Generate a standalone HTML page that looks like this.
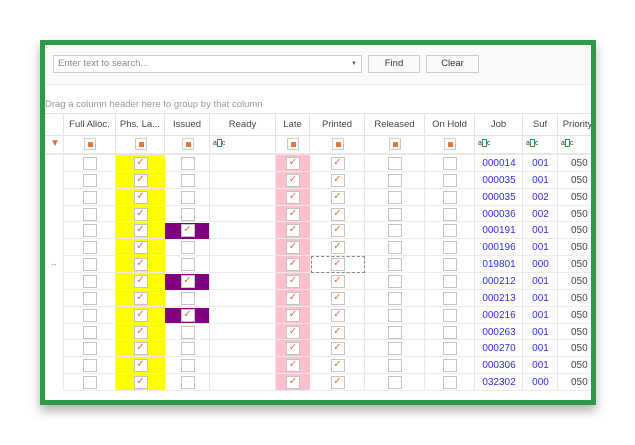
<!DOCTYPE html>
<html><head><meta charset="utf-8"><style>
*{box-sizing:border-box;margin:0;padding:0}
body{width:635px;height:445px;background:#fff;position:relative;overflow:hidden;font-family:"Liberation Sans",sans-serif;font-size:9.5px;color:#444}
#frame{position:absolute;left:40px;top:40px;width:556px;height:365px;border:5px solid #2e9a48;background:#fff;overflow:hidden;box-shadow:0 6px 10px rgba(0,0,0,0.3)}
.a{position:absolute}
.cb{position:absolute;width:12px;height:12px;border:1.5px solid #c4c4c4;background:#fff}
.ck{color:#e0703a;font-size:10px;line-height:10px;text-align:center}
.fsq{position:absolute;width:12px;height:12px;border:1px solid #ccc;background:#fff}
.fsq:after{content:"";position:absolute;left:3px;top:3px;width:5px;height:5px;background:#e07a3a}
.hdr{position:absolute;top:73px;height:22px;line-height:22px;text-align:center;border-right:1px solid #e4e4e4;color:#444;font-size:9.5px;white-space:nowrap;overflow:hidden}
.num{position:absolute;text-align:center;color:#3030e0;font-size:10px}
</style></head><body>
<div id="frame">
<div class="a" style="left:0;top:0;width:560px;height:40px;background:#fafafa;border-bottom:1px solid #eee"></div>
<div class="a" style="left:8px;top:10px;width:309px;height:18px;border:1px solid #ccc;background:#fff;color:#888;line-height:16px;padding-left:4px">Enter text to search...<span style="position:absolute;right:4px;font-size:6px;color:#555">▼</span></div>
<div class="a" style="left:323px;top:10px;width:52px;height:18px;border:1px solid #ccc;background:#fafafa;text-align:center;line-height:16px;color:#333">Find</div>
<div class="a" style="left:381px;top:10px;width:53px;height:18px;border:1px solid #ccc;background:#fafafa;text-align:center;line-height:16px;color:#333">Clear</div>
<div class="a" style="left:0;top:54px;color:#999;font-size:9.5px">Drag a column header here to group by that column</div>
<div id="g"></div>
</div>
<script>
var f=document.getElementById('g'),h='';
var cols=[['',0,19],['Full Alloc.',19,52],['Phs. La...',71,49],['Issued',120,45],['Ready',165,66],['Late',231,34],['Printed',265,55],['Released',320,60],['On Hold',380,50],['Job',430,48],['Suf',478,35],['Priority',513,40]];
var top0=68;
h+='<div class="a" style="left:0;top:'+top0+'px;width:560px;height:1px;background:#e4e4e4"></div>';
h+='<div class="a" style="left:0;top:90px;width:560px;height:1px;background:#e4e4e4"></div>';
h+='<div class="a" style="left:0;top:108px;width:560px;height:2px;background:#e8e8e8"></div>';
cols.forEach(function(c){h+='<div class="hdr" style="top:69px;left:'+c[1]+'px;width:'+c[2]+'px">'+c[0]+'</div>';
h+='<div class="a" style="left:'+(c[1]+c[2]-1)+'px;top:90px;width:1px;height:255px;background:#e8e8e8"></div>';});
h+='<div class="a" style="left:5px;top:93px;color:#e0703a;font-size:10px">▼</div>';
[1,2,3,5,6,7,8].forEach(function(i){var c=cols[i];h+='<div class="fsq" style="left:'+(c[1]+c[2]/2-6)+'px;top:93px"></div>';});
[4,9,10,11].forEach(function(i){var c=cols[i];h+='<div class="a" style="left:'+(c[1]+3)+'px;top:94px;font-size:7px;color:#333">a<span style="display:inline-block;width:5px;height:8px;border:1.5px solid #2e9a48;vertical-align:middle"></span>c</div>';});
var jobs=['000014','000035','000035','000036','000191','000196','019801','000212','000213','000216','000263','000270','000306','032302'];
var sufs=['001','001','002','002','001','001','000','001','001','001','001','001','001','000'];
var purple=[4,7,9];
var rh=16.85,y0=110;
h+='<div class="a" style="left:'+cols[2][1]+'px;top:'+y0+'px;width:49px;height:'+(rh*14)+'px;background:#ffff00"></div>';
h+='<div class="a" style="left:'+cols[5][1]+'px;top:'+y0+'px;width:34px;height:'+(rh*14)+'px;background:#ffc0cb"></div>';
for(var r=0;r<14;r++){var y=y0+r*rh;
h+='<div class="a" style="left:19px;top:'+(y+rh-1)+'px;width:540px;height:1px;background:#ececec"></div>';
if(purple.indexOf(r)>=0)h+='<div class="a" style="left:120px;top:'+(y+1)+'px;width:44px;height:'+(rh-1)+'px;background:#800080"></div>';
[1,2,3,5,6,7,8].forEach(function(i){var c=cols[i];var chk=(i==2||i==5||i==6||(i==3&&purple.indexOf(r)>=0));
h+='<div class="cb ck" style="left:'+(c[1]+c[2]/2-7)+'px;top:'+(y+2)+'px;width:14px;height:13px">'+(chk?'✓':'')+'</div>';});
h+='<div class="num" style="left:430px;width:48px;top:'+(y+3)+'px">'+jobs[r]+'</div>';
h+='<div class="num" style="left:478px;width:35px;top:'+(y+3)+'px">'+sufs[r]+'</div>';
h+='<div class="a" style="left:526px;top:'+(y+3)+'px;color:#444;font-size:10px">050</div>';
}
var y6=y0+6*rh;
h+='<div class="a" style="left:4px;top:'+(y6+2)+'px;color:#f08050;font-size:9px">→</div>';
h+='<div class="a" style="left:266px;top:'+(y6)+'px;width:54px;height:'+rh+'px;border:1px dashed #888"></div>';
f.innerHTML=h;
</script>
</body></html>
